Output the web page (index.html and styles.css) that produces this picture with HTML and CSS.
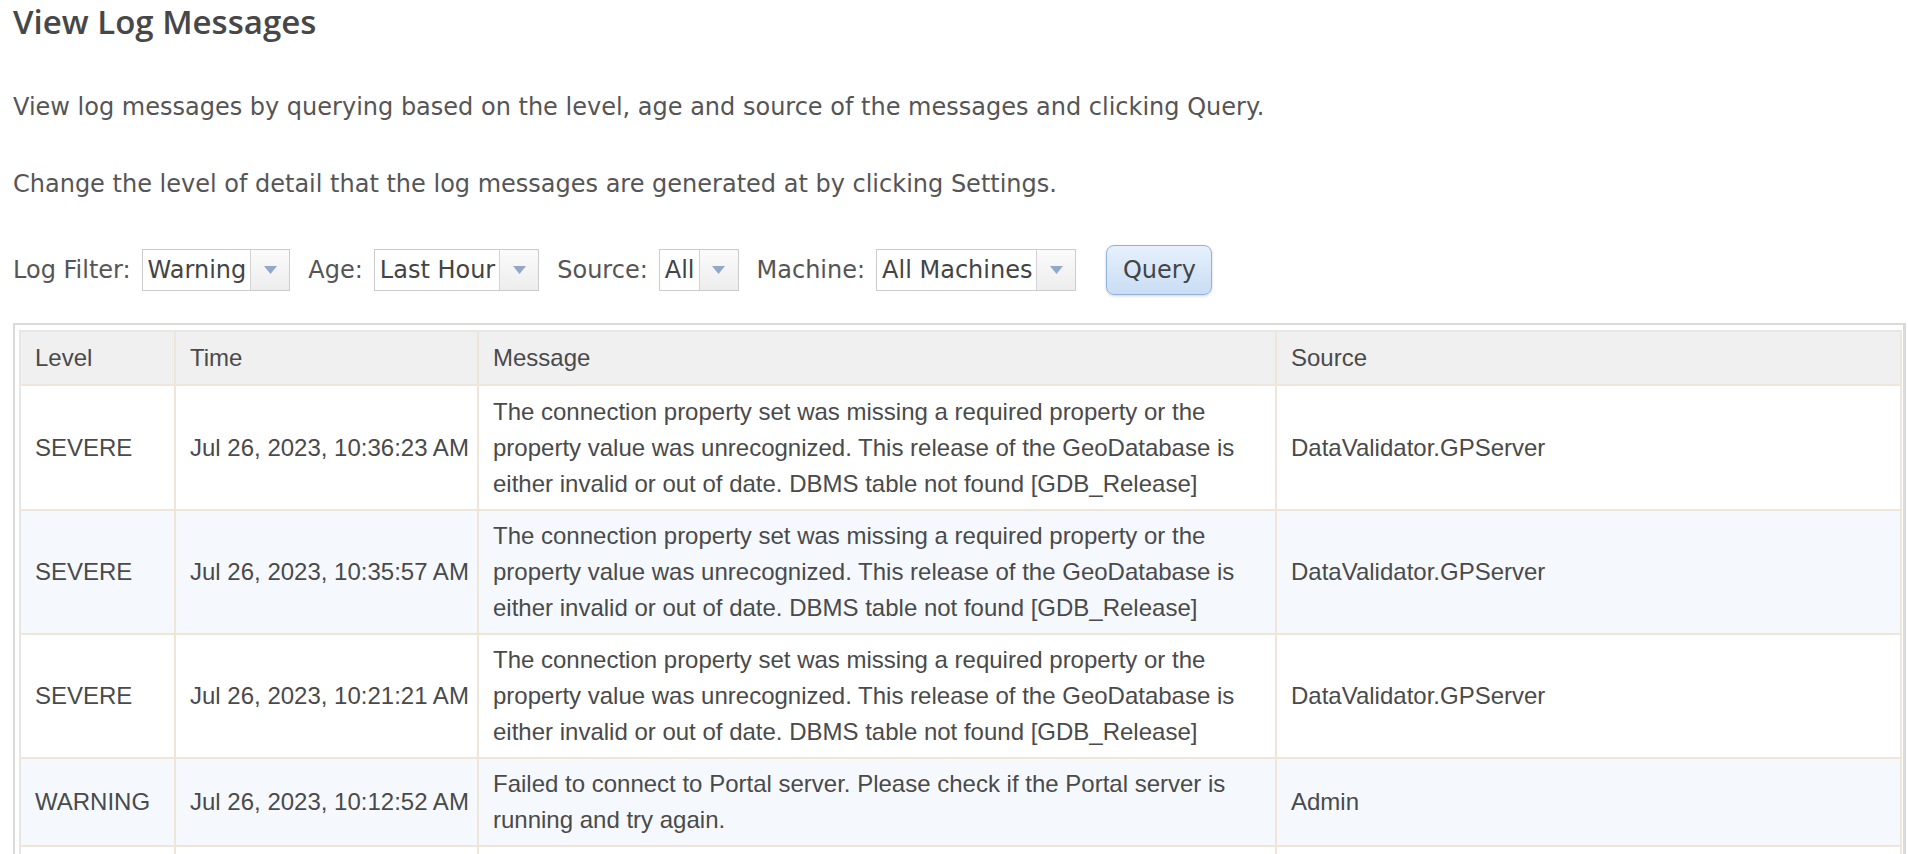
FILE: index.html
```html
<!DOCTYPE html>
<html lang="en">
<head>
<meta charset="utf-8">
<title>View Log Messages</title>
<link rel="stylesheet" href="styles.css">
</head>
<body>
<main class="page">
  <h1 class="title">View Log Messages</h1>
  <p class="intro first">View log messages by querying based on the level, age and source of the messages and clicking Query.</p>
  <p class="intro second">Change the level of detail that the log messages are generated at by clicking Settings.</p>

  <div class="filters">
    <label class="filter-label">Log Filter:</label>
    <div class="select"><span class="select-value">Warning</span><span class="select-arrow"><svg width="13" height="8" viewBox="0 0 13 8"><path d="M0 0H13L6.5 8Z"/></svg></span></div>
    <label class="filter-label">Age:</label>
    <div class="select"><span class="select-value">Last Hour</span><span class="select-arrow"><svg width="13" height="8" viewBox="0 0 13 8"><path d="M0 0H13L6.5 8Z"/></svg></span></div>
    <label class="filter-label">Source:</label>
    <div class="select"><span class="select-value">All</span><span class="select-arrow"><svg width="13" height="8" viewBox="0 0 13 8"><path d="M0 0H13L6.5 8Z"/></svg></span></div>
    <label class="filter-label">Machine:</label>
    <div class="select"><span class="select-value">All Machines</span><span class="select-arrow"><svg width="13" height="8" viewBox="0 0 13 8"><path d="M0 0H13L6.5 8Z"/></svg></span></div>
    <button class="query-btn" type="button">Query</button>
  </div>

  <div class="grid-frame">
    <table class="log-table">
      <colgroup>
        <col class="c-level">
        <col class="c-time">
        <col class="c-msg">
        <col class="c-src">
      </colgroup>
      <thead>
        <tr><th>Level</th><th>Time</th><th>Message</th><th>Source</th></tr>
      </thead>
      <tbody>
        <tr>
          <td>SEVERE</td>
          <td class="time">Jul 26, 2023, 10:36:23 AM</td>
          <td>The connection property set was missing a required property or the property value was unrecognized. This release of the GeoDatabase is either invalid or out of date. DBMS table not found [GDB_Release]</td>
          <td>DataValidator.GPServer</td>
        </tr>
        <tr class="alt">
          <td>SEVERE</td>
          <td class="time">Jul 26, 2023, 10:35:57 AM</td>
          <td>The connection property set was missing a required property or the property value was unrecognized. This release of the GeoDatabase is either invalid or out of date. DBMS table not found [GDB_Release]</td>
          <td>DataValidator.GPServer</td>
        </tr>
        <tr>
          <td>SEVERE</td>
          <td class="time">Jul 26, 2023, 10:21:21 AM</td>
          <td>The connection property set was missing a required property or the property value was unrecognized. This release of the GeoDatabase is either invalid or out of date. DBMS table not found [GDB_Release]</td>
          <td>DataValidator.GPServer</td>
        </tr>
        <tr class="alt">
          <td>WARNING</td>
          <td class="time">Jul 26, 2023, 10:12:52 AM</td>
          <td>Failed to connect to Portal server. Please check if the Portal server is running and try again.</td>
          <td>Admin</td>
        </tr>
        <tr class="blank">
          <td>&nbsp;</td>
          <td>&nbsp;</td>
          <td>&nbsp;</td>
          <td>&nbsp;</td>
        </tr>
      </tbody>
    </table>
  </div>
</main>
</body>
</html>
```

FILE: styles.css
```css
html, body {
  margin: 0;
  padding: 0;
  background: #ffffff;
}

body {
  overflow: hidden;
}

.page {
  padding: 0 2px 0 13px;
  font-family: "DejaVu Sans", Verdana, sans-serif;
  color: #555555;
}

.title {
  margin: 0;
  font-family: "Open Sans", Lato, sans-serif;
  font-weight: 600;
  font-size: 33px;
  line-height: 44px;
  color: #474747;
}

.intro {
  margin: 0;
  font-size: 24px;
  line-height: 30px;
  color: #555555;
}

.intro.first {
  margin-top: 48px;
}

.intro.second {
  margin-top: 47px;
}

.filters {
  display: flex;
  align-items: center;
  margin-top: 46px;
  height: 50px;
}

.filter-label {
  font-size: 24px;
  color: #555555;
  margin-right: 11px;
}

.select {
  display: flex;
  height: 42px;
  box-sizing: border-box;
  border: 1px solid #cccccc;
  background: #ffffff;
  margin-right: 18px;
}

.select-value {
  padding: 0 4px 0 5px;
  font-size: 24px;
  line-height: 40px;
  color: #444444;
}

.select-arrow {
  width: 38px;
  border-left: 1px solid #d4d4d4;
  background: linear-gradient(#fbfbfb, #ededed);
  display: flex;
  align-items: center;
  justify-content: center;
}

.select-arrow svg {
  fill: #93a8c9;
}

.query-btn {
  margin-left: 12px;
  width: 106px;
  height: 50px;
  box-sizing: border-box;
  border: 1px solid #8fb3de;
  border-radius: 8px;
  background: linear-gradient(#e6f0fc, #c9ddf4);
  box-shadow: 0 1px 3px rgba(0, 0, 0, 0.18);
  font-family: "DejaVu Sans", Verdana, sans-serif;
  font-size: 24px;
  color: #444444;
  padding: 0;
}

.grid-frame {
  margin-top: 28px;
  border: 2px solid #dadada;
  border-right-width: 3px;
  padding: 5px 1px 0 4px;
}

.log-table {
  width: 100%;
  table-layout: fixed;
  border-collapse: collapse;
  border-top: 2px solid #e6e6e6;
  border-left: 2px solid #e6e6e6;
  font-family: "Liberation Sans", Arial, sans-serif;
  font-size: 24px;
  line-height: 36px;
  color: #4a4a4a;
}

.c-level { width: 155px; }
.c-time { width: 303px; }
.c-msg { width: 798px; }

.log-table th {
  background: #f0f0f0;
  font-weight: normal;
  text-align: left;
  padding: 8px 14px 8px;
  border-right: 2px solid #efe5d8;
  border-bottom: 2px solid #efe5d8;
}

.log-table td {
  padding: 7px 14px 7px;
  vertical-align: middle;
  border-right: 2px solid #efe5d8;
  border-bottom: 2px solid #efe5d8;
}

.log-table thead + tbody tr:first-child td {
  padding-top: 8px;
}

.log-table td.time {
  white-space: nowrap;
  padding-right: 4px;
}

.log-table tr.alt td {
  background: #f5f9fe;
}
```
